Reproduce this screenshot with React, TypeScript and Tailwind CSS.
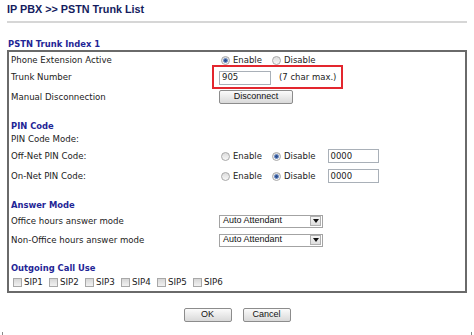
import React from "react";

const V = { fontFamily: '"DejaVu Sans", Verdana, sans-serif' };
const A = { fontFamily: '"Liberation Sans", Arial, sans-serif' };

function Radio({ on }: { on?: boolean }) {
  return (
    <span className="inline-flex items-center justify-center w-[9px] h-[9px] rounded-full border border-[#a8a8a8] bg-gradient-to-b from-[#dcdcdc] to-[#f8f8f8] shrink-0">
      {on && (
        <span className="w-[5px] h-[5px] rounded-full bg-[#2c4f8f] border border-[#6f8fc8]" />
      )}
    </span>
  );
}

function RadioPair({ enable }: { enable: boolean }) {
  return (
    <div className="flex items-center text-[8.5px] text-[#222]" style={V}>
      <div className="flex items-center w-[53px] pl-[2px]">
        <Radio on={enable} />
        <span className="ml-[3px]">Enable</span>
      </div>
      <div className="flex items-center">
        <Radio on={!enable} />
        <span className="ml-[3px]">Disable</span>
      </div>
    </div>
  );
}

function TextBox({ value, w }: { value: string; w: number }) {
  return (
    <div
      className="h-[14px] border border-[#a9b0b8] bg-white flex items-center pl-[2px] text-[8.5px] text-[#222]"
      style={{ ...V, width: w }}
    >
      {value}
    </div>
  );
}

function Btn({ label, w }: { label: string; w: number }) {
  return (
    <div
      className="h-[14px] flex items-center justify-center rounded-[2px] border border-[#8c8c8c] bg-gradient-to-b from-[#fbfbfb] to-[#d9d9d9] text-[9px] text-[#111]"
      style={{ ...A, width: w }}
    >
      {label}
    </div>
  );
}

function Select() {
  return (
    <div className="w-[104px] h-[13px] border border-[#a3a3a3] bg-white flex items-center justify-between pl-[3px] pr-[1px] text-[9px] text-[#111]" style={A}>
      <span>Auto Attendant</span>
      <span className="w-[11px] h-[10px] border border-[#b0b0b0] bg-gradient-to-b from-[#f6f6f6] to-[#dedede] flex items-center justify-center">
        <svg width="6" height="4" viewBox="0 0 6 4">
          <path d="M0 0 L6 0 L3 4 Z" fill="#111" />
        </svg>
      </span>
    </div>
  );
}

function Check({ label }: { label: string }) {
  return (
    <div className="flex items-center w-[36px]">
      <span className="w-[9px] h-[9px] border border-[#a8a8a8] bg-gradient-to-b from-[#d6d6d6] to-[#f2f2f2] shrink-0" />
      <span className="ml-[2px] text-[8.7px] text-[#222]" style={V}>{label}</span>
    </div>
  );
}

function Row({ h, label, children }: { h: number; label?: string; children?: React.ReactNode }) {
  return (
    <div className="flex items-center" style={{ height: h }}>
      <div className="w-[210px] pl-[2px] text-[8.6px] text-[#222]" style={V}>
        {label}
      </div>
      <div className="relative flex items-center">{children}</div>
    </div>
  );
}

function Heading({ text, h, mt }: { text: string; h: number; mt: number }) {
  return (
    <div
      className="pl-[2px] flex items-center font-bold text-[8.4px] text-[#1f2696]"
      style={{ ...V, height: h, marginTop: mt }}
    >
      {text}
    </div>
  );
}

export default function App() {
  return (
    <div className="w-[474px] h-[335px] bg-white overflow-hidden flex flex-col">
      <div className="pl-[7px]">
        <div className="mt-[3px] h-[13px] leading-[13px] font-bold text-[10.8px] text-[#141c5e]" style={A}>
          IP PBX &gt;&gt; PSTN Trunk List
        </div>
        <div className="mt-[5px] w-[460px] h-[2px] bg-[#d6d6d6]" />
        <div className="mt-[15px] h-[12px] leading-[12px] pl-[1px] font-bold text-[8.4px] text-[#1f2696]" style={V}>
          PSTN Trunk Index 1
        </div>
        <div className="w-[460px] h-[243px] border-2 border-[#6a6a6a] flex flex-col">
          <Row h={16} label="Phone Extension Active">
            <RadioPair enable={true} />
          </Row>
          <Row h={19} label="Trunk Number">
            <TextBox value="905" w={52} />
            <span className="ml-[8px] text-[8.5px] text-[#222]" style={V}>(7 char max.)</span>
            <div className="absolute left-[-7px] top-[-6px] w-[131px] h-[24px] border-2 border-[#e3262e]" />
          </Row>
          <Row h={20} label="Manual Disconnection">
            <Btn label="Disconnect" w={74} />
          </Row>
          <Heading text="PIN Code" h={12} mt={13} />
          <Row h={14} label="PIN Code Mode:" />
          <Row h={20} label="Off-Net PIN Code:">
            <RadioPair enable={false} />
            <div className="ml-[12px]">
              <TextBox value="0000" w={51} />
            </div>
          </Row>
          <Row h={20} label="On-Net PIN Code:">
            <RadioPair enable={false} />
            <div className="ml-[12px]">
              <TextBox value="0000" w={51} />
            </div>
          </Row>
          <Heading text="Answer Mode" h={12} mt={13} />
          <Row h={20} label="Office hours answer mode">
            <Select />
          </Row>
          <Row h={18} label="Non-Office hours answer mode">
            <Select />
          </Row>
          <Heading text="Outgoing Call Use" h={12} mt={13} />
          <div className="flex items-center pl-[4px] h-[17px]">
            {["SIP1", "SIP2", "SIP3", "SIP4", "SIP5", "SIP6"].map((s) => (
              <Check key={s} label={s} />
            ))}
          </div>
        </div>
      </div>
      <div className="mt-[15px] flex justify-center gap-[11px]">
        <Btn label="OK" w={48} />
        <Btn label="Cancel" w={48} />
      </div>
      <div className="mt-[10px] mx-[2px] h-[4px] border-l border-r border-[#8a8a8a]" />
    </div>
  );
}
